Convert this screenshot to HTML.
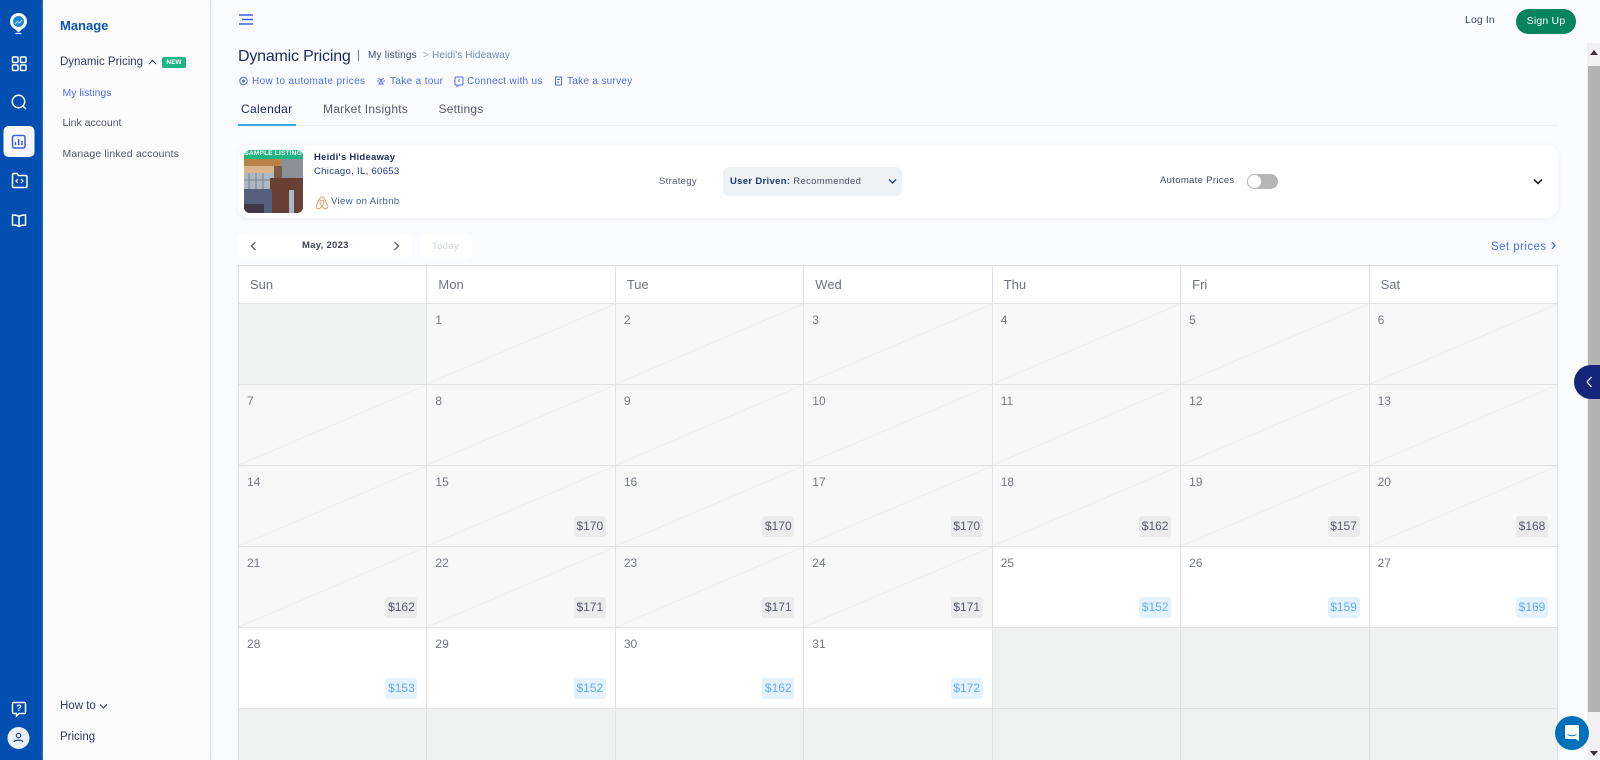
<!DOCTYPE html>
<html><head><meta charset="utf-8">
<style>
*{box-sizing:border-box}
html,body{margin:0;padding:0;width:1600px;height:760px;overflow:hidden;background:#fafbfe;font-family:"Liberation Sans",sans-serif}
#root{position:relative;width:1600px;height:760px;overflow:hidden;background:#fafbfe}
.t{position:absolute;white-space:nowrap;line-height:1}
svg{position:absolute;overflow:visible}
#grid{position:absolute;left:238px;top:265px;width:1320px;height:524px;display:grid;grid-template-columns:repeat(7,1fr);grid-template-rows:38px repeat(6,81px);border-left:1px solid #ddd;border-top:1px solid #ddd}
#grid>div{position:relative;border-right:1px solid #e2e2e2;border-bottom:1px solid #e2e2e2;font-size:12px;color:#757985}
.h{background:#fff;font-size:13px!important;padding:11px 0 0 11px;color:#6e7383!important}
.p{background-color:#f8f8f8;background-image:linear-gradient(to bottom right,transparent calc(50% - .6px),#e8e8e8 50%,transparent calc(50% + .6px))}
.w{background:#fff}
.e{background:#f0f1f1}
.n{position:absolute;left:8px;top:9px}
.b{position:absolute;right:9px;bottom:9px;width:32px;height:21px;border-radius:3px;background:#ebebeb;color:#565b70;font-size:12px;text-align:center;line-height:21px}
.w .b{background:#e3f2fd;color:#64aef5}
</style></head><body>
<div id="root">

<div style="position:absolute;left:0;top:0;width:43px;height:760px;background:#024eb1"></div>
<div style="position:absolute;left:43px;top:0;width:168px;height:760px;background:#fcfcfc;border-right:1px solid #e6e6e6;box-shadow:1px 0 3px #e8e8e8"></div>

<svg style="left:0;top:0" width="43" height="760" fill="none" stroke="#fff" stroke-width="1.5">
<circle cx="18.500" cy="21.500" r="8.500" fill="#fff" stroke="none"/>
<circle cx="18.500" cy="21.500" r="5.500" fill="#1e88d8" stroke="none"/>
<path d="M15 24l2.500-2.500 2 1.500 2.500-3" stroke="#bfe3fa" stroke-width="1"/>
<path d="M14.500 28.500l4 4 4-4z" fill="#fff" stroke="none"/>
<path d="M15.500 33.500h6" stroke-width="1.200"/>
<rect x="12.500" y="57" width="5.500" height="5.500" rx="1"/><rect x="20.500" y="57" width="5.500" height="5.500" rx="1"/>
<rect x="12.500" y="65" width="5.500" height="5.500" rx="1"/><rect x="20.500" y="65" width="5.500" height="5.500" rx="1"/>
<circle cx="18.500" cy="101.500" r="6.200"/><path d="M23 106l3 3"/>
<rect x="3.500" y="126" width="31" height="31" rx="5" fill="#f7f8fc" stroke="none"/>
<rect x="12.500" y="135.500" width="12.500" height="12.500" rx="2" stroke="#3b5fe0"/>
<path d="M15.500 145v-3M18.700 145v-6M22 145v-4" stroke="#3b5fe0"/>
<path d="M12.500 186v-11c0-1 .5-1.500 1.500-1.500h3l1.500 2h7c1 0 1.500.5 1.500 1.500v9c0 1-.5 1.500-1.500 1.500h-11.500c-1 0-1.500-.5-1.500-1.500z"/>
<path d="M18 179l-2 2 2 2M21 179l2 2-2 2" stroke-width="1.200"/>
<path d="M19 216.500c-2-1.500-4-1.500-6.500-1.500v10c2.500 0 4.500 0 6.500 1.500 2-1.500 4-1.500 6.500-1.500v-10c-2.500 0-4.500 0-6.500 1.500zM19 216.500v10"/>
<path d="M14 702.500h10c1 0 1.500.5 1.500 1.500v8c0 1-.5 1.500-1.500 1.500h-5l-2.500 2.500v-2.500h-2.500c-1 0-1.500-.5-1.500-1.500v-8c0-1 .5-1.500 1.500-1.500z"/>
<circle cx="18.500" cy="738" r="11" fill="#e9f1fb" stroke="none"/>
<circle cx="18.500" cy="735.500" r="2.200" stroke="#2f3f7a" stroke-width="1.200"/>
<path d="M14 742c1-2.500 8-2.500 9 0" stroke="#2f3f7a" stroke-width="1.200"/>
</svg>
<div class="t" style="left:16.200px;top:703.500px;color:#fff;font-size:9px;font-weight:bold">?</div>

<div class="t" style="left:60px;top:19px;font-size:13px;font-weight:bold;color:#0b55b5">Manage</div>
<div class="t" style="left:60px;top:57px;font-size:11.500px;color:#2f3a6b">Dynamic Pricing</div>
<svg style="left:148px;top:59px" width="10" height="7" fill="none" stroke="#2f3a6b" stroke-width="1.200"><path d="M1 5l3.500-3.500L8 5"/></svg>
<div class="t" style="left:162px;top:57px;width:24px;height:11px;border-radius:2px;background:#1fb486;color:#fff;font-size:6.500px;font-weight:bold;text-align:center;line-height:11px">NEW</div>
<div class="t" style="left:62.500px;top:88px;font-size:10.500px;color:#4d6fe6">My listings</div>
<div class="t" style="left:62.500px;top:118px;font-size:10.500px;color:#4f5568">Link account</div>
<div class="t" style="left:62.500px;top:149px;font-size:10.500px;color:#4f5568;letter-spacing:.15px">Manage linked accounts</div>
<div class="t" style="left:60px;top:701px;font-size:11.500px;color:#2f3a6b">How to</div>
<svg style="left:99px;top:703px" width="10" height="7" fill="none" stroke="#2f3a6b" stroke-width="1.100"><path d="M1 1.500l3.500 3.500L8 1.500"/></svg>
<div class="t" style="left:60px;top:732px;font-size:11.500px;color:#2f3a6b">Pricing</div>

<svg style="left:239px;top:14px" width="16" height="12" fill="none" stroke="#3b5fe0" stroke-width="1.500"><path d="M0 1h14M3 5.500h11M0 10h14"/></svg>
<div class="t" style="left:1465px;top:15px;font-size:10.500px;color:#3a4a78;letter-spacing:.1px">Log In</div>
<div class="t" style="left:1516px;top:9px;width:60px;height:25px;border-radius:13px;background:#08845c;color:#fff;font-size:10.500px;text-align:center;line-height:25px;letter-spacing:.2px">Sign Up</div>

<div class="t" style="left:238px;top:49px;font-size:16px;color:#1d2b5a;letter-spacing:-.2px">Dynamic Pricing</div>
<div style="position:absolute;left:358px;top:50px;width:1px;height:11px;background:#777"></div>
<div class="t" style="left:368px;top:51px;font-size:10px;color:#3a4a70;letter-spacing:.2px">My listings</div>
<div class="t" style="left:423px;top:51px;font-size:10px;color:#9aa">&gt;</div>
<div class="t" style="left:432px;top:51px;font-size:10px;color:#6f8fb8;letter-spacing:.1px">Heidi's Hideaway</div>

<svg style="left:239px;top:75px" width="400" height="12" fill="none" stroke="#4d6fe6" stroke-width="1">
<circle cx="4.500" cy="6" r="3.700"/><circle cx="4.500" cy="6" r="1" fill="#4d6fe6"/>
<path d="M139 3l3 2 3-2M142 5l-2 4h4zM138 6h2M144 6h2"/>
<path d="M217 2h6c.7 0 1 .3 1 1v6c0 .7-.3 1-1 1h-3l-2 1.500v-1.500h-1c-.7 0-1-.3-1-1v-6c0-.7.3-1 1-1zM220 4v3"/>
<path d="M316.500 2h6v8h-6zM318 4.500h3M318 7h2"/>
</svg>
<div class="t" style="left:252px;top:76.500px;font-size:10px;color:#4d6fe6;letter-spacing:.38px">How to automate prices</div>
<div class="t" style="left:390px;top:76.500px;font-size:10px;color:#4d6fe6;letter-spacing:.35px">Take a tour</div>
<div class="t" style="left:467px;top:76.500px;font-size:10px;color:#4d6fe6;letter-spacing:.3px">Connect with us</div>
<div class="t" style="left:567px;top:76.500px;font-size:10px;color:#4d6fe6;letter-spacing:.3px">Take a survey</div>

<div class="t" style="left:241px;top:103px;font-size:12px;color:#14285a;letter-spacing:.35px">Calendar</div>
<div class="t" style="left:323px;top:103px;font-size:12px;color:#555c70;letter-spacing:.25px">Market Insights</div>
<div class="t" style="left:438.500px;top:103px;font-size:12px;color:#555c70;letter-spacing:.2px">Settings</div>
<div style="position:absolute;left:238px;top:125px;width:1320px;height:1px;background:#eef0f3"></div>
<div style="position:absolute;left:238px;top:124px;width:58px;height:1.500px;background:#3da5ea"></div>

<div style="position:absolute;left:238px;top:145px;width:1320px;height:73px;background:#fff;border-radius:12px;box-shadow:0 1px 6px #eef0f4"></div>
<svg style="left:244px;top:150px" width="59" height="63">
<clipPath id="c"><rect width="59" height="63" rx="6"/></clipPath>
<g clip-path="url(#c)">
<rect width="59" height="63" fill="#7a5a48"/>
<rect y="8" width="45" height="8" fill="#b8824c"/>
<rect y="16" width="30" height="7" fill="#d9b48a"/>
<rect x="38" y="8" width="21" height="22" fill="#8a8f98"/>
<rect y="23" width="30" height="16" fill="#aeb8c4"/>
<path d="M5 23v16M12 23v16M19 23v16M0 30h30" stroke="#7a7f8a" stroke-width="1"/>
<rect x="26" y="28" width="33" height="35" fill="#6a3f33"/>
<rect y="39" width="28" height="24" fill="#54607c"/>
<rect x="45" y="40" width="5" height="23" fill="#a8b8c8"/>
<rect y="54" width="20" height="9" fill="#403a48"/>
<rect width="59" height="9" fill="#1db584"/>
</g></svg>
<div class="t" style="left:244.500px;top:151px;font-size:6.500px;font-weight:bold;color:#fff;letter-spacing:.2px">SAMPLE LISTING</div>
<div class="t" style="left:314px;top:152.500px;font-size:9.500px;font-weight:bold;color:#1d2b5a;letter-spacing:.25px">Heidi's Hideaway</div>
<div class="t" style="left:314px;top:166.500px;font-size:9.500px;color:#1d3a78;letter-spacing:.32px">Chicago, IL, 60653</div>
<svg style="left:315px;top:196px" width="14" height="14" fill="none" stroke="#e0a070" stroke-width="1"><path d="M7 1C8 1 8.800 1.600 9.300 2.600L12.600 9.200C13.400 10.900 12.400 12.800 10.500 12.800 9.200 12.800 8 11.800 7 10.200 6 11.800 4.800 12.800 3.500 12.800 1.600 12.800.600 10.900 1.400 9.200L4.700 2.600C5.200 1.600 6 1 7 1Z"/><path d="M7 10.200C5.600 8.400 5 7.200 5 6 5 4.900 5.900 4.200 7 4.200S9 4.900 9 6C9 7.200 8.400 8.400 7 10.200Z"/></svg>
<div class="t" style="left:331px;top:197px;font-size:9.500px;color:#3a5a98;letter-spacing:.38px">View on Airbnb</div>

<div class="t" style="left:659px;top:177px;font-size:9.500px;color:#555c70;letter-spacing:.32px">Strategy</div>
<div style="position:absolute;left:723px;top:167px;width:179px;height:29px;border-radius:6px;background:#eff2f5"></div>
<div class="t" style="left:730px;top:177px;font-size:9.500px;color:#4a5268;letter-spacing:.32px"><b style="color:#1d3a78">User Driven:</b> Recommended</div>
<svg style="left:888px;top:178px" width="10" height="7" fill="none" stroke="#1d3a78" stroke-width="1.300"><path d="M1 1.500l3.500 3.500L8 1.500"/></svg>
<div class="t" style="left:1160px;top:175.500px;font-size:9.500px;color:#3e4a68;letter-spacing:.32px">Automate Prices</div>
<div style="position:absolute;left:1247px;top:174px;width:31px;height:15px;border-radius:8px;background:#b5b5b5"></div>
<div style="position:absolute;left:1247px;top:174px;width:15px;height:15px;border-radius:50%;background:#fff;border:1px solid #bbb"></div>
<svg style="left:1533px;top:178px" width="11" height="8" fill="none" stroke="#2a2030" stroke-width="1.600"><path d="M1 1.500l4 4 4-4"/></svg>

<div style="position:absolute;left:238px;top:233px;width:174px;height:25px;background:#fff;border-radius:6px"></div>
<svg style="left:250px;top:241px" width="8" height="10" fill="none" stroke="#555" stroke-width="1.200"><path d="M5.500 1L1.500 5l4 4"/></svg>
<svg style="left:393px;top:241px" width="8" height="10" fill="none" stroke="#555" stroke-width="1.200"><path d="M1.500 1l4 4-4 4"/></svg>
<div class="t" style="left:302px;top:241px;font-size:9.500px;font-weight:bold;color:#3a4058;letter-spacing:.28px">May, 2023</div>
<div style="position:absolute;left:420px;top:233px;width:52px;height:25px;background:#fff;border-radius:6px"></div>
<div class="t" style="left:432px;top:241.500px;font-size:9.500px;color:#cfd6e0;letter-spacing:.3px">Today</div>
<div class="t" style="left:1491px;top:241.500px;font-size:11.500px;color:#4d6fe6;letter-spacing:.45px">Set prices</div>
<svg style="left:1551px;top:241px" width="6" height="9" fill="none" stroke="#4d6fe6" stroke-width="1.300"><path d="M1 1l3 3.500L1 8"/></svg>

<div id="grid">
<div class="h">Sun</div><div class="h">Mon</div><div class="h">Tue</div><div class="h">Wed</div><div class="h">Thu</div><div class="h">Fri</div><div class="h">Sat</div>
<div class="e"></div><div class="p"><span class="n">1</span></div><div class="p"><span class="n">2</span></div><div class="p"><span class="n">3</span></div><div class="p"><span class="n">4</span></div><div class="p"><span class="n">5</span></div><div class="p"><span class="n">6</span></div>
<div class="p"><span class="n">7</span></div><div class="p"><span class="n">8</span></div><div class="p"><span class="n">9</span></div><div class="p"><span class="n">10</span></div><div class="p"><span class="n">11</span></div><div class="p"><span class="n">12</span></div><div class="p"><span class="n">13</span></div>
<div class="p"><span class="n">14</span></div><div class="p"><span class="n">15</span><span class="b">$170</span></div><div class="p"><span class="n">16</span><span class="b">$170</span></div><div class="p"><span class="n">17</span><span class="b">$170</span></div><div class="p"><span class="n">18</span><span class="b">$162</span></div><div class="p"><span class="n">19</span><span class="b">$157</span></div><div class="p"><span class="n">20</span><span class="b">$168</span></div>
<div class="p"><span class="n">21</span><span class="b">$162</span></div><div class="p"><span class="n">22</span><span class="b">$171</span></div><div class="p"><span class="n">23</span><span class="b">$171</span></div><div class="p"><span class="n">24</span><span class="b">$171</span></div><div class="w"><span class="n">25</span><span class="b">$152</span></div><div class="w"><span class="n">26</span><span class="b">$159</span></div><div class="w"><span class="n">27</span><span class="b">$169</span></div>
<div class="w"><span class="n">28</span><span class="b">$153</span></div><div class="w"><span class="n">29</span><span class="b">$152</span></div><div class="w"><span class="n">30</span><span class="b">$162</span></div><div class="w"><span class="n">31</span><span class="b">$172</span></div><div class="e"></div><div class="e"></div><div class="e"></div>
<div class="e"></div><div class="e"></div><div class="e"></div><div class="e"></div><div class="e"></div><div class="e"></div><div class="e"></div>
</div>

<div style="position:absolute;left:1587px;top:43px;width:13px;height:717px;background:#f1f1f1"></div>
<div style="position:absolute;left:1588px;top:66px;width:12px;height:646px;background:#b3b3b3"></div>
<svg style="left:1590px;top:50px" width="10" height="6"><path d="M0 5h8L4 0z" fill="#40323c"/></svg>
<svg style="left:1590px;top:751px" width="10" height="6"><path d="M0 0h8L4 5z" fill="#40323c"/></svg>

<div style="position:absolute;left:1574px;top:365px;width:26px;height:34px;background:#14257a;border-radius:17px 0 0 17px"></div>
<svg style="left:1586px;top:376px" width="8" height="12" fill="none" stroke="#fff" stroke-width="1.200"><path d="M5.500 1L1 6l4.500 5"/></svg>

<div style="position:absolute;left:1555px;top:716px;width:34px;height:34px;border-radius:50%;background:#0070ba"></div>
<svg style="left:1565px;top:725px" width="15" height="17"><path d="M1.500 0h11c1 0 1.500.5 1.500 1.500V16l-3.500-2H1.500C.5 14 0 13.500 0 12.500v-11C0 .5.500 0 1.500 0z" fill="#fff"/><path d="M2.500 9.500c3 1.700 6 1.700 9 0" fill="none" stroke="#0070ba" stroke-width="1"/></svg>

</div>
</body></html>
